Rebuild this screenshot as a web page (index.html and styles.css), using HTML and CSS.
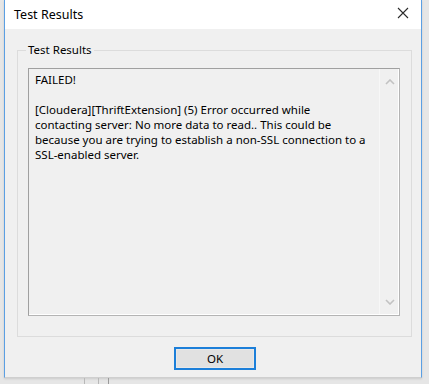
FILE: index.html
```html
<!DOCTYPE html>
<html>
<head>
<meta charset="utf-8">
<link rel="stylesheet" href="styles.css">
</head>
<body>
<div class="screen">
  <div class="dialog">
    <div class="titlebar">
      <span class="title">Test Results</span>
      <span class="close">
        <svg width="12" height="12" viewBox="0 0 12 12"><path d="M1 1L11 11M11 1L1 11" stroke="#2b2b2b" stroke-width="1.1" fill="none"/></svg>
      </span>
    </div>
    <div class="client">
      <fieldset class="group">
        <legend class="legend">Test Results</legend>
        <div class="textbox">
          <div class="text">
            <p class="line">FAILED!</p>
            <p class="line">&nbsp;</p>
            <p class="line">[Cloudera][ThriftExtension] (5) Error occurred while<br>contacting server: No more data to read.. This could be<br>because you are trying to establish a non-SSL connection to a<br>SSL-enabled server.</p>
          </div>
          <div class="scrollbar">
            <svg class="arrow" width="10" height="6" viewBox="0 0 10 6"><path d="M1 5L5 1L9 5" stroke="#c2c2c2" stroke-width="1.6" fill="none"/></svg>
            <svg class="arrow" width="10" height="6" viewBox="0 0 10 6"><path d="M1 1L5 5L9 1" stroke="#c2c2c2" stroke-width="1.6" fill="none"/></svg>
          </div>
        </div>
      </fieldset>
      <div class="buttons">
        <button class="ok">OK</button>
      </div>
    </div>
  </div>
  <div class="strip">
    <span class="tick t1"></span>
    <span class="tick t2"></span>
    <span class="tick t3"></span>
  </div>
</div>
</body>
</html>
```
FILE: styles.css
```css
html, body {
  margin: 0;
  padding: 0;
}
body {
  font-family: "Noto Sans", "Open Sans", sans-serif;
  font-size: 11.5px;
  color: #000;
  background: #e4e4e4;
}
.screen {
  width: 429px;
  height: 384px;
  overflow: hidden;
  background: #e6e6e6;
}
.dialog {
  margin-left: 4px;
  width: 416px;
  height: 377px;
  border-left: 1px solid #5b9fe3;
  border-right: 1px solid #5b9fe3;
  border-bottom: 1px solid #cfcfcf;
  display: flex;
  flex-direction: column;
  box-shadow: 0 1px 2px rgba(0,0,0,0.12);
}
.titlebar {
  height: 29px;
  flex: none;
  background: #fff;
  display: flex;
  align-items: center;
  justify-content: space-between;
  padding-left: 9px;
  padding-right: 12px;
}
.title {
  font-size: 12.5px;
  color: #000;
  margin-top: -1px;
}
.close {
  display: flex;
  margin-top: -3px;
}
.client {
  flex: 1;
  background: #f0f0f0;
  display: flex;
  flex-direction: column;
}
.group {
  flex: none;
  margin: 13px 9px 0 12px;
  padding: 0 11px 20px 10px;
  border: 1px solid #dcdcdc;
  min-width: 0;
}
.legend {
  margin-left: -2px;
  padding: 0 2px;
  line-height: 16px;
  font-size: 11.5px;
  color: #000;
}
.textbox {
  margin-top: 10px;
  height: 248px;
  box-sizing: border-box;
  border: 1px solid #a0a0a0;
  border-right-color: #b4b4b4;
  border-bottom-color: #b4b4b4;
  box-shadow: inset -1px -1px 0 #fff;
  display: flex;
  background: #f0f0f0;
}
.text {
  flex: 1;
  padding: 3px 0 0 6px;
  white-space: nowrap;
}
.line {
  margin: 0;
  line-height: 15px;
}
.scrollbar {
  width: 19px;
  flex: none;
  border-left: 1px solid #f7f7f7;
  display: flex;
  flex-direction: column;
  justify-content: space-between;
  align-items: center;
  padding: 10px 0 9px;
  margin-bottom: 1px;
}
.buttons {
  flex: none;
  display: flex;
  justify-content: center;
  padding-left: 4px;
  margin-top: 10px;
}
.ok {
  width: 82px;
  height: 23px;
  box-sizing: border-box;
  border: 2px solid #1c7fd9;
  background: #e1e1e1;
  box-shadow: inset 0 0 0 1px #e8e8e8;
  font-family: "Noto Sans", "Open Sans", sans-serif;
  font-size: 11.5px;
  color: #000;
  padding: 0;
}
.strip {
  display: flex;
  height: 6px;
  padding-left: 84px;
}
.tick {
  width: 1px;
  height: 6px;
  background: #b8b8b8;
}
.t2 {
  margin-left: 13px;
}
.t3 {
  margin-left: 9px;
  background: #9a9a9a;
}
```
